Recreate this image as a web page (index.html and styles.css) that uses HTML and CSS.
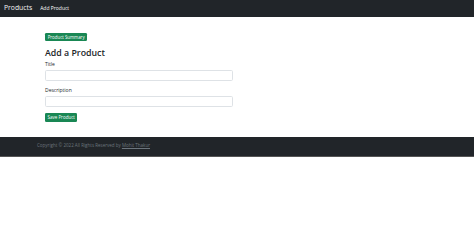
FILE: index.html
```html
<!DOCTYPE html>
<html>
<head>
<meta charset="utf-8">
<link rel="stylesheet" href="styles.css">
</head>
<body>
<nav class="navbar">
  <a class="brand" href="#">Products</a>
  <a class="nav-link" href="#">Add Product</a>
</nav>
<main class="container">
  <a class="btn btn-summary" href="#">Product Summary</a>
  <h3 class="title">Add a Product</h3>
  <form class="form">
    <div class="field">
      <label class="label">Title</label>
      <input class="input" type="text">
    </div>
    <div class="field">
      <label class="label">Description</label>
      <input class="input" type="text">
    </div>
    <button class="btn btn-save" type="button">Save Product</button>
  </form>
</main>
<footer class="footer">
  <p class="copy">Copyright © 2022 All Rights Reserved by <a class="footer-link" href="#">Mohit Thakur</a></p>
</footer>
</body>
</html>
```
FILE: styles.css
```css
* { box-sizing: border-box; }
body {
  margin: 0;
  font-family: "Open Sans", "Noto Sans", sans-serif;
  font-size: 5px;
  line-height: 1.2;
  color: #212529;
  background: #fff;
}
.navbar {
  height: 17px;
  background: #212529;
  display: flex;
  align-items: center;
  padding-left: 4px;
}
.brand {
  color: #f2f2f2;
  text-decoration: none;
  font-size: 6.8px;
  line-height: 1;
}
.nav-link {
  color: #fff;
  text-decoration: none;
  font-size: 5px;
  margin-left: 8px;
  line-height: 1;
}
.container {
  margin-left: 45px;
  width: 188px;
  padding-top: 15.5px;
  display: flex;
  flex-direction: column;
  align-items: flex-start;
}
.btn {
  display: flex;
  align-items: center;
  background: #198754;
  color: #fff;
  border: none;
  border-radius: 1.3px;
  font-family: inherit;
  text-decoration: none;
  line-height: 1;
}
.btn-summary {
  height: 8.6px;
  padding: 0 2.7px;
  font-size: 4.4px;
}
.title {
  margin: 6.5px 0 0;
  font-size: 8.8px;
  font-weight: 600;
  line-height: 1.2;
}
.form {
  margin-top: 3px;
  width: 188px;
  display: flex;
  flex-direction: column;
  align-items: flex-start;
}
.field {
  display: flex;
  flex-direction: column;
  width: 100%;
  margin-bottom: 6.5px;
}
.label {
  font-size: 5px;
  line-height: 1.2;
  margin-bottom: 3px;
}
.input {
  height: 10.5px;
  width: 188px;
  border: 0.5px solid #dee2e6;
  border-radius: 1.6px;
  padding: 0;
}
.btn-save {
  height: 8.5px;
  padding: 0 2.5px;
  font-size: 4.5px;
}
.footer {
  margin-top: 15px;
  height: 20px;
  background: #212529;
  border-bottom: 1px solid #555;
  display: flex;
  align-items: center;
  padding-left: 37px;
}
.copy {
  margin: 0;
  font-size: 4.5px;
  color: #6c757d;
}
.footer-link {
  color: #6c757d;
}
```
